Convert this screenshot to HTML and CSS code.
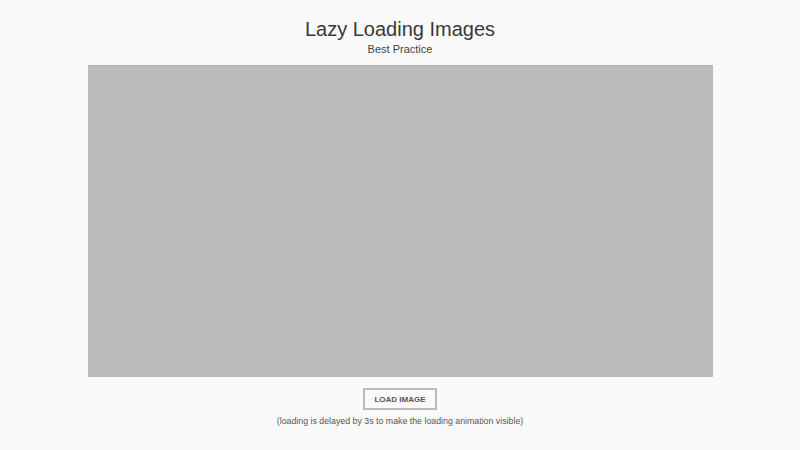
FILE: index.html
```html
<!DOCTYPE html>
<html lang="en">
<head>
    <meta charset="UTF-8">
    <meta name="viewport" content="width=device-width, initial-scale=1.0">
    <title>Lazy Loading Images</title>
    <link rel="stylesheet" href="styles.css">
</head>

<body>
    <div class="page">
        <!-- Header -->
        <h1 class="title">Lazy Loading Images</h1>
        <p class="subtitle">Best Practice</p>

        <div class="image-frame" id="imageFrame"></div>

        <!-- Load button -->
        <button class="load-btn" id="loadBtn">Load Image</button>
        <p class="note">(loading is delayed by 3s to make the loading animation visible)</p>
    </div>
</body>

</html>
```

FILE: styles.css
```css
body {
    font-family: 'Liberation Sans', Arial, sans-serif;
    background: #fafafa;
    color: #333;
    margin: 0;
}

.page {
    display: flex;
    flex-direction: column;
    align-items: center;
    padding-top: 17px;
}

.title {
    font-size: 20px;
    font-weight: normal;
    color: #383838;
    margin: 0;
    line-height: 24px;
}

.subtitle {
    font-size: 11px;
    color: #444;
    margin: 1px 0 9px;
    line-height: 14px;
}

.image-frame {
    width: 625px;
    height: 312px;
    background-color: #bbb;
    border-top: 1px solid #b0b0b0;
    box-sizing: border-box;
}

.load-btn {
    margin-top: 11px;
    padding: 0 9px;
    height: 22px;
    font-family: inherit;
    font-size: 8px;
    font-weight: bold;
    text-transform: uppercase;
    color: #555;
    background: transparent;
    border: 2px solid #bbb;
    cursor: pointer;
}

.note {
    font-size: 8.8px;
    color: #555;
    margin: 5px 0 0;
    line-height: 12px;
}
```
